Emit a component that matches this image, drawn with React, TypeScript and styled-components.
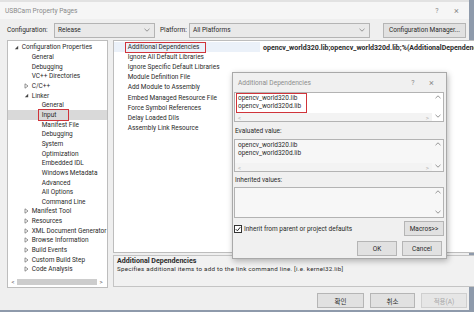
import React from 'react';
import styled, { createGlobalStyle } from 'styled-components';

const Global = createGlobalStyle`
  html, body { margin: 0; padding: 0; background: #8e9aab; }
  body { font-family: Roboto, "Noto Sans CJK KR", sans-serif; }
`;

const Frame = styled.div`
  width: 474px;
  height: 312px;
  background: #8e9aab;
  overflow: hidden;
`;

const Window = styled.div`
  position: relative;
  width: 469px;
  height: 310px;
  background: #efefef;
  display: flex;
  flex-direction: column;
  font-size: 6.5px;
  color: #2a2a2a;
`;

const TitleBar = styled.div`
  height: 19px;
  display: flex;
  align-items: center;
  padding-left: 5px;
  background: #f6f6f6;
  border-top: 2px solid #e2e2e2;
  box-sizing: border-box;
  color: #8a8a8a;
  font-size: 6.6px;
`;

const TitleText = styled.span`
  flex: 1;
`;

const CaptionBtn = styled.span<{ $w: number }>`
  width: ${p => p.$w}px;
  text-align: center;
  color: #8a8a8a;
  font-size: ${p => (p.$w > 20 ? 9 : 7)}px;
`;

const ConfigRow = styled.div`
  margin-top: 3px;
  height: 16px;
  display: flex;
  align-items: center;
  padding-left: 7px;
`;

const Label = styled.span<{ $w: number }>`
  width: ${p => p.$w}px;
  flex: none;
`;

const Select = styled.div<{ $w: number }>`
  width: ${p => p.$w}px;
  height: 15px;
  box-sizing: border-box;
  border: 1px solid #b4b4b4;
  background: #e9e9e9;
  display: flex;
  align-items: center;
  padding: 0 4px 0 3px;
  flex: none;
`;

const SelectText = styled.span`
  flex: 1;
`;

const Button = styled.div<{ $w: number; $disabled?: boolean }>`
  width: ${p => p.$w}px;
  height: 15px;
  box-sizing: border-box;
  border: 1px solid #b5b5b5;
  display: flex;
  align-items: center;
  justify-content: center;
  flex: none;
  color: ${p => (p.$disabled ? '#a8a8a8' : '#2a2a2a')};
  background: ${p => (p.$disabled ? '#e6e6e6' : '#e1e1e1')};
  border-color: ${p => (p.$disabled ? '#cfcfcf' : '#b5b5b5')};
`;

const Spacer = styled.div<{ $w: number }>`
  width: ${p => p.$w}px;
  flex: none;
`;

const Main = styled.div`
  margin-top: 2px;
  height: 248px;
  display: flex;
  gap: 5px;
  padding: 0 3px 0 7px;
`;

const Tree = styled.div`
  width: 101px;
  flex: none;
  box-sizing: border-box;
  border: 1px solid #bdbdbd;
  background: #fff;
  display: flex;
  flex-direction: column;
  overflow: hidden;
`;

const TreeList = styled.div`
  flex: 1;
  padding-top: 1.5px;
`;

const TreeRow = styled.div<{ $level: number; $selected?: boolean }>`
  height: 9.67px;
  display: flex;
  align-items: center;
  padding-left: ${p => 6 + p.$level * 10}px;
  white-space: nowrap;
  background: ${p => (p.$selected ? '#d9d9d9' : 'transparent')};
`;

const ArrowSlot = styled.span`
  width: 7.7px;
  flex: none;
  display: flex;
  align-items: center;
`;

const Marked = styled.span<{ $l: number; $r: number; $t: number; $b: number }>`
  position: relative;
  &::after {
    content: '';
    position: absolute;
    left: ${p => p.$l}px;
    right: ${p => p.$r}px;
    top: ${p => p.$t}px;
    bottom: ${p => p.$b}px;
    border: 1.3px solid #d0343a;
  }
`;

const HScroll = styled.div`
  height: 9px;
  display: flex;
  align-items: center;
  padding: 0 2px 0 1px;
  margin-bottom: 1px;
  color: #555;
  font-size: 6px;
`;

const ScrollArrow = styled.span`
  width: 8px;
  text-align: center;
  flex: none;
`;

const Thumb = styled.div`
  flex: 1;
  height: 6px;
  background: #cdcdcd;
`;

const RightCol = styled.div`
  flex: 1;
  display: flex;
  flex-direction: column;
  gap: 2px;
`;

const Grid = styled.div`
  height: 213px;
  box-sizing: border-box;
  border: 1px solid #bdbdbd;
  background: #fff;
  padding-top: 1px;
  overflow: hidden;
`;

const GridRow = styled.div`
  height: 10.1px;
  display: flex;
  align-items: center;
  white-space: nowrap;
`;

const NameCell = styled.div<{ $sel?: boolean }>`
  width: 146px;
  height: 100%;
  flex: none;
  display: flex;
  align-items: center;
  padding-left: 13.7px;
  box-sizing: border-box;
  background: ${p => (p.$sel ? '#ebf1f9' : 'transparent')};
`;

const ValueCell = styled.div`
  flex: 1;
  padding-left: 3px;
  font-weight: 700;
  font-size: 7.05px;
  overflow: hidden;
  white-space: nowrap;
`;

const Desc = styled.div`
  height: 32px;
  box-sizing: border-box;
  border: 1px solid #c4c4c4;
  background: #f1f1f1;
  padding: 0.5px 3px;
  line-height: 8.6px;
`;

const DescTitle = styled.div`
  font-weight: 700;
  font-size: 7.1px;
`;

const DescText = styled.div`
  font-size: 6.2px;
  letter-spacing: 0.25px;
`;

const Footer = styled.div`
  margin-top: 5px;
  display: flex;
  justify-content: flex-end;
  gap: 6px;
  padding-right: 2px;
`;

/* Dialog */
const Dialog = styled.div`
  position: absolute;
  left: 232px;
  top: 72px;
  width: 215px;
  height: 187px;
  box-sizing: border-box;
  background: #f0f0f0;
  border: 1px solid #a9a9a9;
  box-shadow: 1px 2px 6px rgba(0, 0, 0, 0.28);
  display: flex;
  flex-direction: column;
  padding: 0 2px 0 1px;
`;

const DTitle = styled.div`
  height: 19px;
  display: flex;
  align-items: center;
  padding-left: 4px;
  color: #8d8d8d;
  font-size: 6.6px;
`;

const EditBox = styled.div<{ $h: number; $bg: string }>`
  height: ${p => p.$h}px;
  box-sizing: border-box;
  border: 1px solid #b3b3b3;
  background: ${p => p.$bg};
  display: grid;
  grid-template-columns: 1fr 11px;
  grid-template-rows: 1fr 8px;
`;

const EditText = styled.div`
  padding: 0.5px 0 0 3px;
  line-height: 8.5px;
  white-space: nowrap;
`;

const VScroll = styled.div`
  grid-row: 1 / 3;
  grid-column: 2;
  display: flex;
  flex-direction: column;
  justify-content: space-between;
  align-items: center;
  padding: 2px 0 3px;
  color: #9a9a9a;
`;

const EditHScroll = styled.div`
  display: flex;
  justify-content: space-between;
  align-items: center;
  padding: 0 3px;
  color: #b0b0b0;
  font-size: 6px;
  background: #f3f3f3;
`;

const DLabel = styled.div<{ $h: number }>`
  height: ${p => p.$h}px;
  display: flex;
  align-items: center;
  padding-left: 1px;
`;

const CheckRow = styled.div`
  margin-top: 3px;
  display: flex;
  align-items: center;
`;

const CheckBox = styled.span`
  width: 8px;
  height: 8px;
  box-sizing: border-box;
  border: 1px solid #333;
  background: #fff;
  display: flex;
  align-items: center;
  justify-content: center;
  margin-right: 2px;
  flex: none;
`;

const CheckText = styled.span`
  flex: 1;
`;

const DButtons = styled.div`
  margin-top: 5px;
  display: flex;
  justify-content: flex-end;
  gap: 5px;
  padding-right: 2px;
`;

const Chevron = ({ dir }: { dir: 'down' | 'up' }) => (
  <svg width="6" height="4" viewBox="0 0 6 4">
    <polyline
      points={dir === 'down' ? '0.5,0.8 3,3.2 5.5,0.8' : '0.5,3.2 3,0.8 5.5,3.2'}
      fill="none"
      stroke="#8a8a8a"
      strokeWidth="0.9"
    />
  </svg>
);

const OpenArrow = () => (
  <svg width="5" height="5" viewBox="0 0 5 5">
    <polygon points="4.2,0.8 4.2,4.2 0.8,4.2" fill="#444" />
  </svg>
);

const ClosedArrow = () => (
  <svg width="5" height="6" viewBox="0 0 5 6">
    <polygon points="1,0.8 4,3 1,5.2" fill="none" stroke="#777" strokeWidth="0.8" />
  </svg>
);

const Check = () => (
  <svg width="6" height="6" viewBox="0 0 6 6">
    <polyline points="0.8,3.2 2.4,4.8 5.3,1.2" fill="none" stroke="#222" strokeWidth="1" />
  </svg>
);

type Node = { t: string; l: number; a?: 'o' | 'c'; sel?: boolean };

const tree: Node[] = [
  { t: 'Configuration Properties', l: 0, a: 'o' },
  { t: 'General', l: 1 },
  { t: 'Debugging', l: 1 },
  { t: 'VC++ Directories', l: 1 },
  { t: 'C/C++', l: 1, a: 'c' },
  { t: 'Linker', l: 1, a: 'o' },
  { t: 'General', l: 2 },
  { t: 'Input', l: 2, sel: true },
  { t: 'Manifest File', l: 2 },
  { t: 'Debugging', l: 2 },
  { t: 'System', l: 2 },
  { t: 'Optimization', l: 2 },
  { t: 'Embedded IDL', l: 2 },
  { t: 'Windows Metadata', l: 2 },
  { t: 'Advanced', l: 2 },
  { t: 'All Options', l: 2 },
  { t: 'Command Line', l: 2 },
  { t: 'Manifest Tool', l: 1, a: 'c' },
  { t: 'Resources', l: 1, a: 'c' },
  { t: 'XML Document Generator', l: 1, a: 'c' },
  { t: 'Browse Information', l: 1, a: 'c' },
  { t: 'Build Events', l: 1, a: 'c' },
  { t: 'Custom Build Step', l: 1, a: 'c' },
  { t: 'Code Analysis', l: 1, a: 'c' },
];

const props = [
  'Additional Dependencies',
  'Ignore All Default Libraries',
  'Ignore Specific Default Libraries',
  'Module Definition File',
  'Add Module to Assembly',
  'Embed Managed Resource File',
  'Force Symbol References',
  'Delay Loaded Dlls',
  'Assembly Link Resource',
];

export default function App() {
  return (
    <Frame>
      <Global />
      <Window>
        <TitleBar>
          <TitleText>USBCam Property Pages</TitleText>
          <CaptionBtn $w={14}>?</CaptionBtn>
          <CaptionBtn $w={25}>×</CaptionBtn>
        </TitleBar>

        <ConfigRow>
          <Label $w={47}>Configuration:</Label>
          <Select $w={101}>
            <SelectText>Release</SelectText>
            <Chevron dir="down" />
          </Select>
          <Spacer $w={5} />
          <Label $w={29}>Platform:</Label>
          <Select $w={181}>
            <SelectText>All Platforms</SelectText>
            <Chevron dir="down" />
          </Select>
          <Spacer $w={13} />
          <Button $w={83}>Configuration Manager...</Button>
        </ConfigRow>

        <Main>
          <Tree>
            <TreeList>
              {tree.map((n, i) => (
                <TreeRow key={i} $level={n.l} $selected={n.sel}>
                  <ArrowSlot>{n.a === 'o' ? <OpenArrow /> : n.a === 'c' ? <ClosedArrow /> : null}</ArrowSlot>
                  {n.sel ? (
                    <Marked $l={-4} $r={-13} $t={-2} $b={-2}>{n.t}</Marked>
                  ) : (
                    <span>{n.t}</span>
                  )}
                </TreeRow>
              ))}
            </TreeList>
            <HScroll>
              <ScrollArrow>&lt;</ScrollArrow>
              <Thumb />
              <ScrollArrow>&gt;</ScrollArrow>
            </HScroll>
          </Tree>

          <RightCol>
            <Grid>
              {props.map((p, i) => (
                <GridRow key={p}>
                  <NameCell $sel={i === 0}>
                    {i === 0 ? <Marked $l={-2.7} $r={-7} $t={-1.5} $b={-1.5}>{p}</Marked> : p}
                  </NameCell>
                  <ValueCell>
                    {i === 0 ? 'opencv_world320.lib;opencv_world320d.lib;%(AdditionalDependencies)' : ''}
                  </ValueCell>
                </GridRow>
              ))}
            </Grid>
            <Desc>
              <DescTitle>Additional Dependencies</DescTitle>
              <DescText>Specifies additional items to add to the link command line. [i.e. kernel32.lib]</DescText>
            </Desc>
          </RightCol>
        </Main>

        <Footer>
          <Button $w={47}>확인</Button>
          <Button $w={45}>취소</Button>
          <Button $w={46} $disabled>적용(A)</Button>
        </Footer>

        <Dialog>
          <DTitle>
            <TitleText>Additional Dependencies</TitleText>
            <CaptionBtn $w={12}>?</CaptionBtn>
            <CaptionBtn $w={25}>×</CaptionBtn>
          </DTitle>
          <EditBox $h={30} $bg="#fff">
            <EditText>
              <Marked $l={-2.5} $r={-6} $t={-0.5} $b={-3}>
                opencv_world320.lib
                <br />
                opencv_world320d.lib
              </Marked>
            </EditText>
            <VScroll>
              <Chevron dir="up" />
              <Chevron dir="down" />
            </VScroll>
            <EditHScroll>
              <span>&lt;</span>
              <span>&gt;</span>
            </EditHScroll>
          </EditBox>
          <DLabel $h={17}>Evaluated value:</DLabel>
          <EditBox $h={33} $bg="#f7f7f7">
            <EditText>
              opencv_world320.lib
              <br />
              opencv_world320d.lib
            </EditText>
            <VScroll>
              <Chevron dir="up" />
              <Chevron dir="down" />
            </VScroll>
            <EditHScroll>
              <span>&lt;</span>
              <span>&gt;</span>
            </EditHScroll>
          </EditBox>
          <DLabel $h={15}>Inherited values:</DLabel>
          <EditBox $h={31} $bg="#f7f7f7">
            <EditText />
            <VScroll>
              <Chevron dir="up" />
              <Chevron dir="down" />
            </VScroll>
          </EditBox>
          <CheckRow>
            <CheckBox>
              <Check />
            </CheckBox>
            <CheckText>Inherit from parent or project defaults</CheckText>
            <Button $w={40}>Macros&gt;&gt;</Button>
          </CheckRow>
          <DButtons>
            <Button $w={40}>OK</Button>
            <Button $w={40}>Cancel</Button>
          </DButtons>
        </Dialog>
      </Window>
    </Frame>
  );
}
